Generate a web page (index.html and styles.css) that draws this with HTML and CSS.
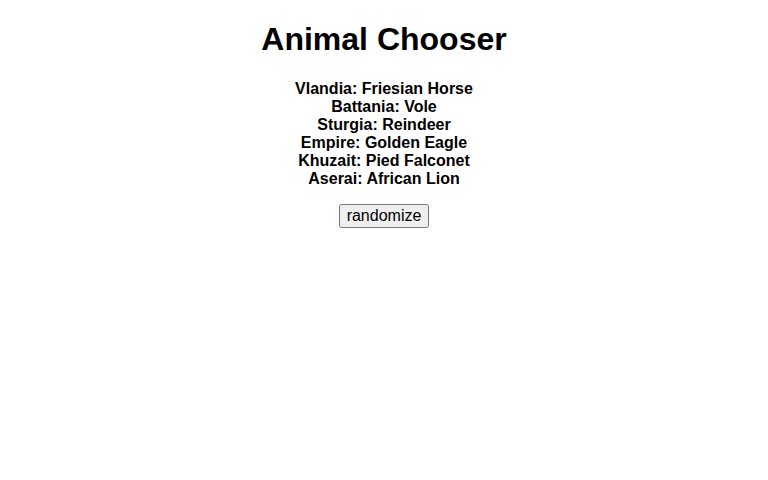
FILE: index.html
```html
<!DOCTYPE html>
<html>
<head>
<meta charset="utf-8">
<title>Animal Chooser</title>
<link rel="stylesheet" href="styles.css">
</head>
<body>
<div class="app">
  <h1 class="title">Animal Chooser</h1>
  <div class="list">
    <div class="row">Vlandia: Friesian Horse</div>
    <div class="row">Battania: Vole</div>
    <div class="row">Sturgia: Reindeer</div>
    <div class="row">Empire: Golden Eagle</div>
    <div class="row">Khuzait: Pied Falconet</div>
    <div class="row">Aserai: African Lion</div>
  </div>
  <button class="btn">randomize</button>
</div>
</body>
</html>
```

FILE: styles.css
```css
body {
  margin: 0 8px;
  font-family: "Liberation Sans", Arial, sans-serif;
  color: #000;
  background: #fff;
}
.app {
  text-align: center;
}
.title {
  font-size: 32px;
  font-weight: bold;
  margin: 21.44px 0;
}
.list {
  font-weight: bold;
  font-size: 16px;
  margin: 0 0 16px;
}
.btn {
  font-family: "Liberation Sans", Arial, sans-serif;
  font-size: 16px;
}
```
